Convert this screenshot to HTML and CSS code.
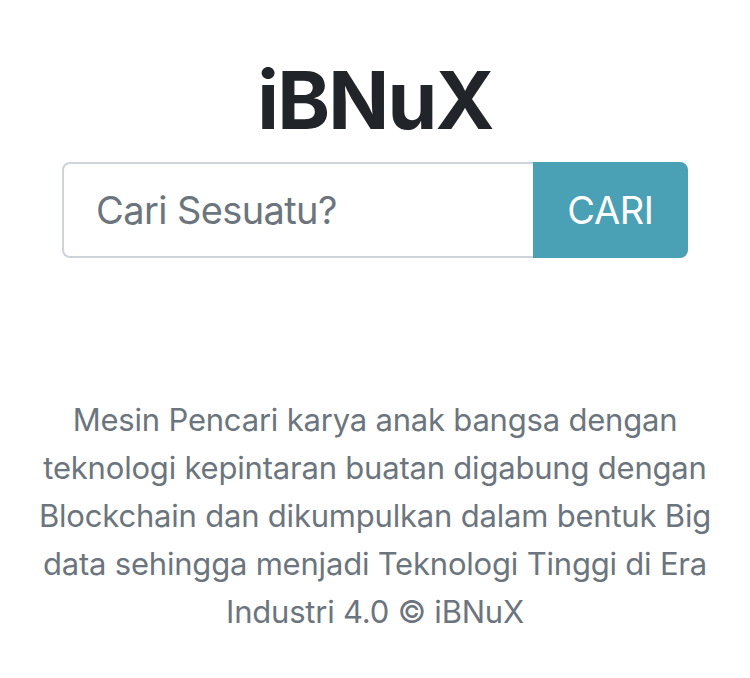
FILE: index.html
```html
<!DOCTYPE html>
<html lang="id">
<head>
<meta charset="utf-8">
<title>iBNuX</title>
<link rel="stylesheet" href="styles.css">
</head>
<body>
<main class="page">
  <h1 class="brand">iBNuX</h1>
  <form class="search">
    <input class="search-input" type="text" placeholder="Cari Sesuatu?">
    <button class="search-btn" type="button">CARI</button>
  </form>
  <p class="about">Mesin Pencari karya anak bangsa dengan teknologi kepintaran buatan digabung dengan Blockchain dan dikumpulkan dalam bentuk Big data sehingga menjadi Teknologi Tinggi di Era Industri 4.0 © iBNuX</p>
</main>
</body>
</html>
```

FILE: styles.css
```css
html, body {
  margin: 0;
  padding: 0;
  background: #ffffff;
}
body {
  font-family: Inter, "Noto Sans", sans-serif;
}
.page {
  display: flex;
  flex-direction: column;
  align-items: center;
  padding: 52px 30px 0;
}
.brand {
  margin: 0 0 14px;
  font-size: 80px;
  line-height: 96px;
  font-weight: 700;
  color: #212529;
  letter-spacing: -1.8px;
}
.search {
  display: flex;
  width: 626px;
  height: 96px;
  margin: 0;
}
.search-input {
  flex: 1;
  min-width: 0;
  box-sizing: border-box;
  height: 96px;
  border: 2px solid #ced4da;
  border-right: none;
  border-radius: 8px 0 0 8px;
  padding: 0 32px;
  font-family: inherit;
  font-size: 38px;
  letter-spacing: -0.6px;
  color: #495057;
  outline: none;
}
.search-input::placeholder {
  color: #6c757d;
}
.search-btn {
  width: 155px;
  height: 96px;
  border: none;
  border-radius: 0 8px 8px 0;
  background: #4aa0b5;
  color: #ffffff;
  font-family: inherit;
  font-size: 38px;
  letter-spacing: -0.4px;
  padding: 0;
}
.about {
  margin: 138px 0 0;
  text-align: center;
  font-size: 31px;
  line-height: 48px;
  letter-spacing: -0.2px;
  color: #6c757d;
}
```
